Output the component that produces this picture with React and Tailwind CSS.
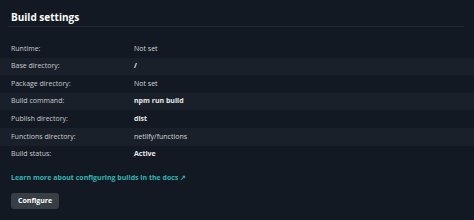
export default function App() {
  const rows = [
    { label: 'Runtime:', value: 'Not set' },
    { label: 'Base directory:', value: '/', bold: true },
    { label: 'Package directory:', value: 'Not set' },
    { label: 'Build command:', value: 'npm run build', bold: true },
    { label: 'Publish directory:', value: 'dist', bold: true },
    { label: 'Functions directory:', value: 'netlify/functions' },
    { label: 'Build status:', value: 'Active', bold: true },
  ];

  return (
    <div className="w-[474px] h-[220px] bg-[#131922] overflow-hidden font-['Open_Sans',sans-serif] text-[#c9ccd1]">
      <div className="px-[11px] pt-[8px]">
        <h2 className="text-[10px] font-bold text-white leading-[18px]">Build settings</h2>
      </div>
      <div className="ml-[8px] mr-[10px] h-px bg-[#222a33]" />

      <div className="mt-[13px]">
        {rows.map((row, i) => (
          <div
            key={row.label}
            className={`flex items-center h-[17.6px] px-[11px] text-[7px] ${i % 2 === 1 ? 'bg-[#1a2029]' : ''}`}
          >
            <span className="w-[123px]">{row.label}</span>
            <span className={row.bold ? 'font-bold text-[#e6e8eb]' : 'text-[#d4d7db]'}>{row.value}</span>
          </div>
        ))}
      </div>

      <div className="px-[11px] mt-[10px] text-[7px] leading-[10px]">
        <a className="font-bold text-[#32b5b5]">Learn more about configuring builds in the docs ↗</a>
      </div>
      <div className="px-[11px] mt-[10px] text-[7px] leading-[10px]">
        <button className="h-[16px] px-[7px] rounded-[3px] bg-[#383e46] text-white font-bold">Configure</button>
      </div>
    </div>
  );
}
